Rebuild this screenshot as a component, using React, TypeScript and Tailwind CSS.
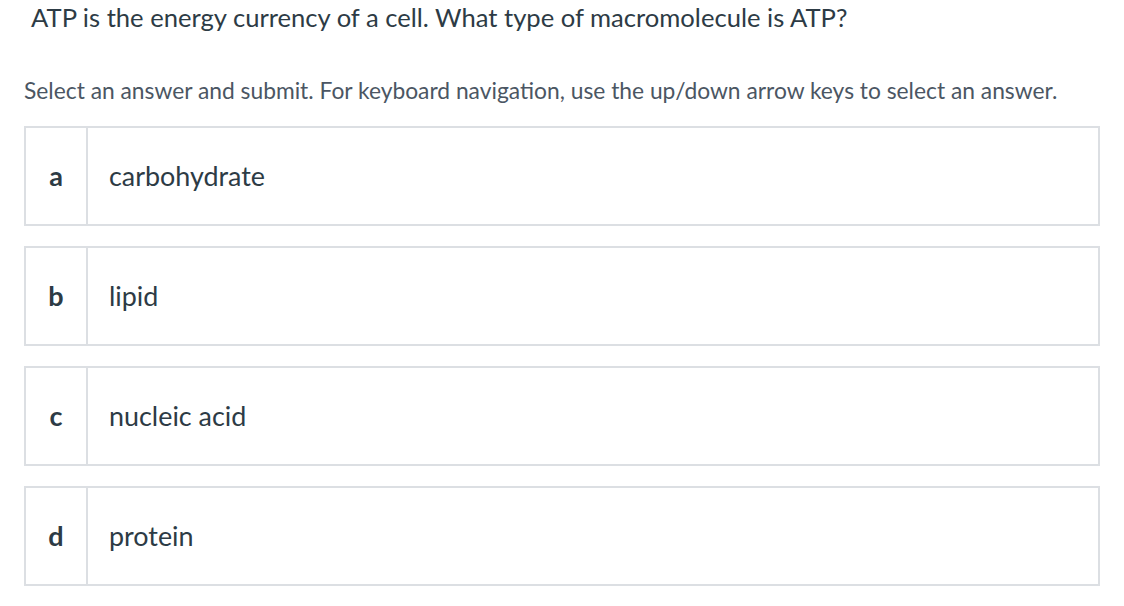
import React from "react";

const options = [
  { k: "a", t: "carbohydrate" },
  { k: "b", t: "lipid" },
  { k: "c", t: "nucleic acid" },
  { k: "d", t: "protein" },
];

export default function App() {
  return (
    <div
      className="w-[1124px] h-[606px] bg-white overflow-hidden"
      style={{ fontFamily: "Lato, 'Noto Sans', sans-serif" }}
    >
      <div className="pl-[31px] pt-[1px] text-[25.6px] leading-[32px] text-[#2d3b45]">
        ATP is the energy currency of a cell. What type of macromolecule is ATP?
      </div>
      <div className="pl-[24px] mt-[43px] text-[22.8px] leading-[28px] text-[#4b5663]">
        Select an answer and submit. For keyboard navigation, use the up/down arrow keys to select an answer.
      </div>
      <div className="mt-[22px] ml-[24px] w-[1076px] flex flex-col gap-[20px]">
        {options.map((o) => (
          <div
            key={o.k}
            className="h-[100px] border-2 border-[#dcdfe3] flex items-stretch"
          >
            <div className="w-[62px] shrink-0 border-r-2 border-[#dcdfe3] flex items-center justify-center text-[27px] font-bold text-[#2d3b45]">
              {o.k}
            </div>
            <div className="flex items-center pl-[21px] text-[26.9px] text-[#2d3b45]">
              {o.t}
            </div>
          </div>
        ))}
      </div>
    </div>
  );
}
